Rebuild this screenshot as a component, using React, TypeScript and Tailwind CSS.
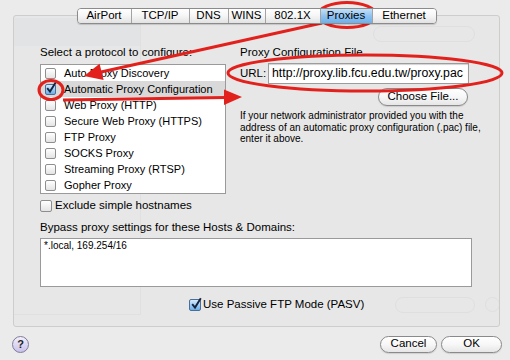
import React from "react";

const SANS = "font-['Liberation_Sans',Arial,sans-serif]";

const tabs = [
  { label: "AirPort", w: "w-[53px]" },
  { label: "TCP/IP", w: "w-[58px]" },
  { label: "DNS", w: "w-[39px]" },
  { label: "WINS", w: "w-[37px]" },
  { label: "802.1X", w: "w-[55px]" },
  { label: "Proxies", w: "w-[52px]", on: true },
  { label: "Ethernet", w: "w-[64px]" },
];

const protocols = [
  "Auto Proxy Discovery",
  "Automatic Proxy Configuration",
  "Web Proxy (HTTP)",
  "Secure Web Proxy (HTTPS)",
  "FTP Proxy",
  "SOCKS Proxy",
  "Streaming Proxy (RTSP)",
  "Gopher Proxy",
];

function Box({ on = false, big = false }: { on?: boolean; big?: boolean }) {
  return (
    <span
      className={`relative flex shrink-0 items-center justify-center rounded-[2px] border ${
        big ? "h-[12px] w-[12px]" : "h-[11px] w-[11px]"
      } ${
        on
          ? "border-[#4b6d99] bg-linear-to-b from-[#d5eafc] to-[#6aaeea]"
          : "border-[#8e8e8e] bg-linear-to-b from-white to-[#e4e4e4]"
      }`}
    >
      {on && (
        <svg viewBox="0 0 12 12" className="-mt-[3px] ml-[1px] h-[12px] w-[12px] overflow-visible">
          <path d="M2.2 6.2 L5 9.6 L10.8 0.2" fill="none" stroke="#15233f" strokeWidth="1.9" />
        </svg>
      )}
    </span>
  );
}

function Pill({ children, w }: { children?: React.ReactNode; w: string }) {
  return (
    <div
      className={`flex h-[17px] ${w} items-center justify-center rounded-full border border-[#8a8a8a] bg-linear-to-b from-white via-[#f7f7f7] to-[#e6e6e6] text-[11.5px] shadow-[0_1px_1px_rgba(0,0,0,0.12)]`}
    >
      {children}
    </div>
  );
}

// faint shapes of the window behind the sheet
function GhostWindow() {
  return (
    <div className="absolute inset-0">
      <div className="absolute left-[14px] top-[18px] h-[28px] w-[126px] bg-[#e0e3e7]" />
      <div className="absolute left-[140px] top-[16px] h-[299px] w-px bg-[#dedede]" />
      <div className="absolute left-[14px] top-[314px] h-px w-[126px] bg-[#dedede]" />
      <div className="absolute left-[373px] top-[26px] h-[16px] w-[102px] rounded-full border border-[#dcdcdc]" />
      <div className="absolute left-[395px] top-[297px] h-[16px] w-[80px] rounded-full border border-[#dcdcdc]" />
      <div className="absolute left-[485px] top-[297px] h-[15px] w-[15px] rounded-full border border-[#dcdcdc]" />
    </div>
  );
}

function Annotations() {
  return (
    <svg className="pointer-events-none absolute inset-0" width="510" height="360" viewBox="0 0 510 360">
      <g fill="none" stroke="#e3211c" strokeWidth="3">
        <ellipse cx="347" cy="15" rx="29" ry="12.5" />
        <ellipse cx="51" cy="90" rx="12" ry="9.5" />
        <ellipse cx="365" cy="73" rx="137" ry="18" />
        <line x1="322" y1="23" x2="101" y2="72" />
        <line x1="63" y1="100" x2="226" y2="97.5" />
      </g>
      <polygon fill="#e3211c" points="84,76 103.6,80 99.6,63.8" />
      <polygon fill="#e3211c" points="242,97 224,89.5 224,105" />
    </svg>
  );
}

export default function App() {
  return (
    <div className={`relative h-[360px] w-[510px] overflow-hidden bg-[#ebebeb] text-black ${SANS}`}>
      <GhostWindow />

      <div className="relative ml-[13px] w-[487px] pt-[8px]">
        {/* tab strip */}
        <div className="relative z-10 flex h-[16px] justify-center">
          <div className="flex overflow-hidden rounded-[4px] border border-[#8b8b8b] shadow-[0_1px_1px_rgba(0,0,0,0.15)]">
            {tabs.map((t, i) => (
              <div
                key={t.label}
                className={`flex h-full ${t.w} items-center justify-center text-[11.5px] ${
                  i > 0 ? "border-l border-[#a3a3a3]" : ""
                } ${
                  t.on
                    ? "bg-linear-to-b from-[#c4e0f8] via-[#8fc2f0] to-[#6cb0ec]"
                    : "bg-linear-to-b from-white via-[#f5f5f5] to-[#e2e2e2]"
                }`}
              >
                {t.label}
              </div>
            ))}
          </div>
        </div>

        {/* tab body */}
        <div className="-mt-[9px] h-[312px] rounded-[3px] border border-[#cdcdcd] bg-[#e3e3e3]/45 pl-[26px] pt-[29px]">
          <div className="flex">
            <div className="w-[186px]">
              <p className="h-[14px] whitespace-nowrap text-[11.5px] leading-[14px]">Select a protocol to configure:</p>
              <div className="mt-[5px] border border-[#9a9a9a] bg-white">
                {protocols.map((p, i) => (
                  <div
                    key={p}
                    className={`flex h-[16px] items-center gap-[8px] pl-[4px] text-[11px] ${
                      i === 1 ? "bg-[#d9d9d9]" : ""
                    }`}
                  >
                    <Box on={i === 1} />
                    <span className="whitespace-nowrap">{p}</span>
                  </div>
                ))}
              </div>
              <div className="mt-[5px] flex h-[14px] items-center gap-[3px] text-[11.5px]">
                <Box big />
                <span className="whitespace-nowrap">Exclude simple hostnames</span>
              </div>
            </div>

            <div className="ml-[14px] w-[236px]">
              <p className="h-[14px] whitespace-nowrap text-[11.5px] leading-[14px]">Proxy Configuration File</p>
              <div className="mt-[4px] flex h-[21px] items-center">
                <span className="w-[28px] text-[11.5px]">URL:</span>
                <div className="flex h-[21px] w-[201px] items-center overflow-hidden whitespace-nowrap border border-[#9c9c9c] bg-white pl-[3px] text-[12.3px] shadow-[inset_0_1px_1px_rgba(0,0,0,0.18)]">
                  http://proxy.lib.fcu.edu.tw/proxy.pac
                </div>
              </div>
              <div className="mt-[4px] pl-[138px]">
                <Pill w="w-[90px] h-[18px]">Choose File...</Pill>
              </div>
              <p className="mt-[4px] whitespace-nowrap text-[10px] leading-[11.5px]">
                If your network administrator provided you with the
                <br />
                address of an automatic proxy configuration (.pac) file,
                <br />
                enter it above.
              </p>
            </div>
          </div>

          <p className="mt-[7px] h-[14px] whitespace-nowrap text-[11.5px] leading-[14px]">
            Bypass proxy settings for these Hosts &amp; Domains:
          </p>
          <div className="mt-[4px] h-[49px] w-[432px] border border-[#9a9a9a] bg-white px-[3px] pt-[1px] text-[10px] leading-[12px]">
            *.local, 169.254/16
          </div>
          <div className="ml-[149px] mt-[11px] flex h-[14px] items-center gap-[2px] text-[11.5px]">
            <Box on big />
            <span className="whitespace-nowrap">Use Passive FTP Mode (PASV)</span>
          </div>
        </div>
      </div>

      {/* sheet buttons */}
      <div className="relative mt-[8px] flex h-[18px] items-center pl-[12px] pr-[8px]">
        <div className="flex h-[17px] w-[17px] items-center justify-center rounded-full border border-[#7f7b98] bg-linear-to-b from-[#f3f0fc] to-[#c9c1ea] text-[11px] font-bold text-[#222]">
          ?
        </div>
        <div className="ml-auto flex gap-[4px]">
          <Pill w="w-[57px]">Cancel</Pill>
          <Pill w="w-[61px]">OK</Pill>
        </div>
      </div>

      <Annotations />
    </div>
  );
}
